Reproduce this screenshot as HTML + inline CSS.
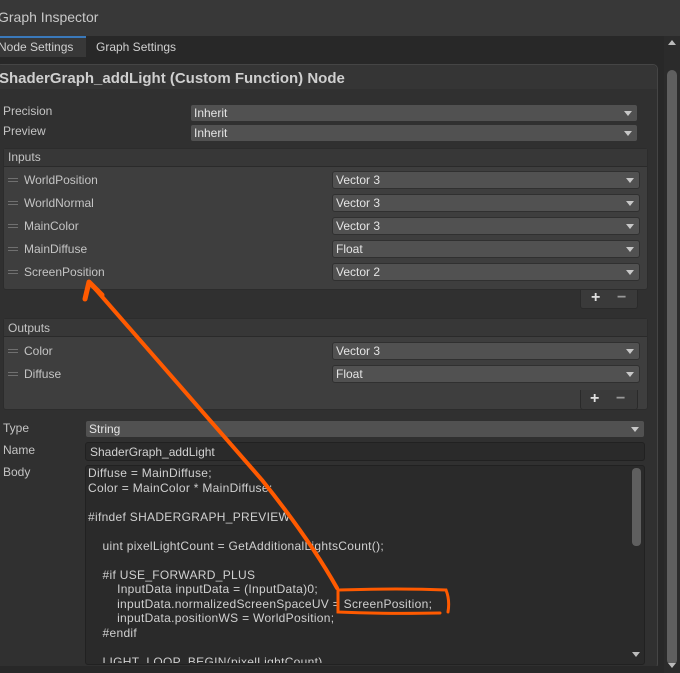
<!DOCTYPE html>
<html><head><style>
*{box-sizing:border-box;margin:0;padding:0}
body{width:680px;height:673px;overflow:hidden;background:#282828;font-family:"Liberation Sans",sans-serif;font-size:12px;color:#c4c4c4;position:relative}
.a{position:absolute}
.dd{position:absolute;background:#515151;border:1px solid #303030;border-radius:3px;height:18px;color:#e4e4e4;padding-left:3px;line-height:16px;font-size:12px}
.dd:after{content:"";position:absolute;right:5px;top:6px;border-left:4px solid transparent;border-right:4px solid transparent;border-top:5px solid #c8c8c8}
.lbl{position:absolute;font-size:12px;color:#c4c4c4}
.grip{position:absolute;width:10px;height:4px;border-top:1px solid #707070;border-bottom:1px solid #707070}
.pm{position:absolute;background:#3a3a3a;border:1px solid #2a2a2a;border-top:none;border-radius:0 0 3px 3px;width:58px;height:19px;color:#e0e0e0;font-size:16px;font-weight:bold}
</style></head><body>
<div class="a" style="left:0;top:0;width:680px;height:36px;background:#383838"></div>
<div class="a" style="left:-2px;top:9px;font-size:14px;color:#c8c8c8">Graph Inspector</div>
<div class="a" style="left:0;top:36px;width:680px;height:21px;background:#282828"></div>
<div class="a" style="left:0;top:36px;width:86px;height:21px;background:#383838;border-top:2px solid #3a79bb"></div>
<div class="a" style="left:-2px;top:40px;color:#d0d0d0">Node Settings</div>
<div class="a" style="left:96px;top:40px;color:#d0d0d0">Graph Settings</div>
<div class="a" style="left:664px;top:36px;width:16px;height:637px;background:#2b2b2b"></div>
<div class="a" style="left:667px;top:70px;width:10px;height:595px;background:#5f5f5f;border-radius:5px"></div>
<div class="a" style="left:668px;top:40px;border-left:4px solid transparent;border-right:4px solid transparent;border-bottom:5px solid #bbb"></div>
<div class="a" style="left:668px;top:663px;border-left:4px solid transparent;border-right:4px solid transparent;border-top:5px solid #bbb"></div>
<div class="a" style="left:-4px;top:64px;width:662px;height:605px;background:#303030;border:1px solid #454545;border-radius:5px"></div>
<div class="a" style="left:-3px;top:65px;width:660px;height:24px;background:#353535;border-radius:5px 5px 0 0"></div>
<div class="a" style="left:-1px;top:70px;font-size:15px;font-weight:bold;color:#cfcfcf">ShaderGraph_addLight (Custom Function) Node</div>
<div class="lbl" style="left:3px;top:104px">Precision</div>
<div class="dd" style="left:190px;top:104px;width:448px">Inherit</div>
<div class="lbl" style="left:3px;top:124px">Preview</div>
<div class="dd" style="left:190px;top:124px;width:448px">Inherit</div>

<div class="a" style="left:3px;top:148px;width:645px;height:142px;background:#3e3e3e;border:1px solid #2c2c2c;border-radius:3px"></div>
<div class="a" style="left:4px;top:149px;width:643px;height:18px;background:#373737;border-bottom:1px solid #2a2a2a"></div>
<div class="lbl" style="left:8px;top:150px">Inputs</div>
<div class="grip" style="left:8px;top:178px"></div><div class="lbl" style="left:24px;top:173px">WorldPosition</div><div class="dd" style="left:332px;top:171px;width:308px">Vector 3</div>
<div class="grip" style="left:8px;top:201px"></div><div class="lbl" style="left:24px;top:196px">WorldNormal</div><div class="dd" style="left:332px;top:194px;width:308px">Vector 3</div>
<div class="grip" style="left:8px;top:224px"></div><div class="lbl" style="left:24px;top:219px">MainColor</div><div class="dd" style="left:332px;top:217px;width:308px">Vector 3</div>
<div class="grip" style="left:8px;top:247px"></div><div class="lbl" style="left:24px;top:242px">MainDiffuse</div><div class="dd" style="left:332px;top:240px;width:308px">Float</div>
<div class="grip" style="left:8px;top:270px"></div><div class="lbl" style="left:24px;top:265px">ScreenPosition</div><div class="dd" style="left:332px;top:263px;width:308px">Vector 2</div>
<div class="pm" style="left:580px;top:290px"><span class="a" style="left:10px;top:-1px">+</span><span class="a" style="left:36px;top:-1px;color:#999">−</span></div>

<div class="a" style="left:3px;top:318px;width:645px;height:92px;background:#3e3e3e;border:1px solid #2c2c2c;border-radius:3px"></div>
<div class="a" style="left:4px;top:319px;width:643px;height:18px;background:#373737;border-bottom:1px solid #2a2a2a"></div>
<div class="lbl" style="left:8px;top:321px">Outputs</div>
<div class="grip" style="left:8px;top:349px"></div><div class="lbl" style="left:24px;top:344px">Color</div><div class="dd" style="left:332px;top:342px;width:308px">Vector 3</div>
<div class="grip" style="left:8px;top:372px"></div><div class="lbl" style="left:24px;top:367px">Diffuse</div><div class="dd" style="left:332px;top:365px;width:308px">Float</div>
<div class="pm" style="left:580px;top:390px;height:20px"></div>
<div class="pm" style="left:580px;top:390px;background:none;border:none"><span class="a" style="left:10px;top:0px">+</span><span class="a" style="left:36px;top:0px;color:#999">−</span></div>

<div class="lbl" style="left:3px;top:421px">Type</div>
<div class="dd" style="left:85px;top:420px;width:560px">String</div>
<div class="lbl" style="left:3px;top:443px">Name</div>
<div class="a" style="left:85px;top:442px;width:560px;height:19px;background:#2a2a2a;border:1px solid #212121;border-radius:3px;padding:2px 4px;color:#d2d2d2">ShaderGraph_addLight</div>
<div class="lbl" style="left:3px;top:465px">Body</div>
<div class="a" style="left:85px;top:465px;width:560px;height:200px;background:#2a2a2a;border:1px solid #212121;border-radius:3px;overflow:hidden"></div>
<div class="a" style="left:632px;top:468px;width:9px;height:78px;background:#5f5f5f;border-radius:4px"></div>
<div class="a" style="left:632px;top:652px;border-left:4px solid transparent;border-right:4px solid transparent;border-top:5px solid #bbb"></div>
<pre class="a" style="left:88px;top:466px;height:197px;overflow:hidden;font-family:'Liberation Sans',sans-serif;font-size:12px;letter-spacing:0.3px;line-height:14.5px;color:#d0d0d0">Diffuse = MainDiffuse;
Color = MainColor * MainDiffuse;

#ifndef SHADERGRAPH_PREVIEW

    uint pixelLightCount = GetAdditionalLightsCount();

    #if USE_FORWARD_PLUS
        InputData inputData = (InputData)0;
        inputData.normalizedScreenSpaceUV = ScreenPosition;
        inputData.positionWS = WorldPosition;
    #endif

    LIGHT_LOOP_BEGIN(pixelLightCount)</pre>
<div class="a" style="left:0;top:666px;width:664px;height:7px;background:#282828"></div>

<svg class="a" style="left:0;top:0" width="680" height="673">
<path d="M91,284 Q170,375 262,480 Q310,540 337,588" fill="none" stroke="#ff5a00" stroke-width="4" stroke-linecap="round"/>
<path d="M85,299 L89,282 L102,295" fill="none" stroke="#ff5a00" stroke-width="5" stroke-linecap="round" stroke-linejoin="round"/>
<path d="M338,590 L338,612 Q380,614 440,613 M338,590 Q400,588 446,590 Q450,600 448,612" fill="none" stroke="#ff5a00" stroke-width="3" stroke-linecap="round"/>
</svg>
</body></html>
